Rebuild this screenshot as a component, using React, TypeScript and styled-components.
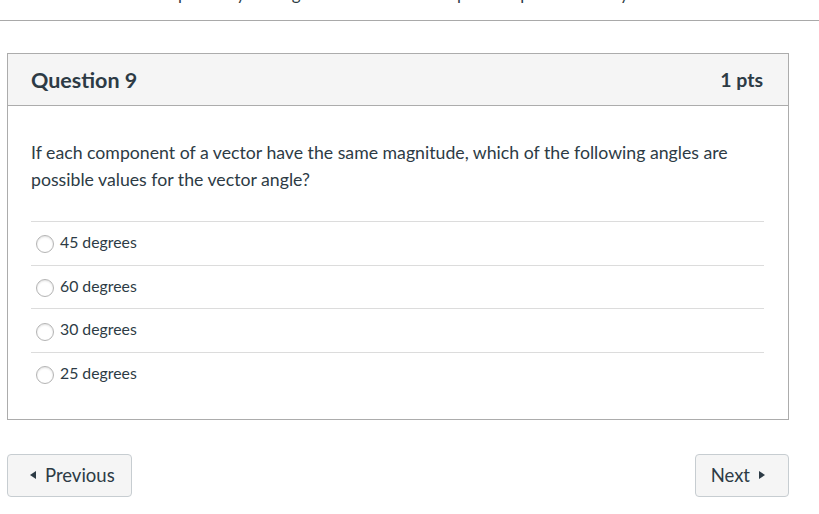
import React from "react";
import styled, { createGlobalStyle } from "styled-components";

const Global = createGlobalStyle`
  html, body { margin: 0; padding: 0; background: #ffffff; }
  body { font-family: Lato, "Noto Sans", "Liberation Sans", sans-serif; color: #2d3b45; }
`;

const Page = styled.div`
  width: 819px;
  height: 514px;
  overflow: hidden;
`;

const TopStrip = styled.div`
  height: 20px;
  border-bottom: 1px solid #a9a9a9;
  overflow: hidden;
`;

const CutText = styled.div`
  font-size: 17px;
  line-height: 20px;
  margin-top: -16px;
  padding-left: 31px;
  white-space: nowrap;
  color: #2d3b45;
`;

const Content = styled.div`
  margin: 32px 0 0 7px;
  width: 782px;
`;

const QuestionBox = styled.div`
  border: 1px solid #acacac;
  background: #fff;
`;

const Header = styled.div`
  height: 51px;
  background: #f5f5f5;
  border-bottom: 1px solid #acacac;
  display: flex;
  align-items: center;
  justify-content: space-between;
  padding: 0 25px 0 23px;
`;

const Title = styled.h2`
  margin: 0;
  font-size: 21.5px;
  font-weight: 700;
  color: #2d3b45;
`;

const Points = styled.span`
  font-size: 19.5px;
  font-weight: 700;
  color: #2d3b45;
`;

const Body = styled.div`
  padding: 33px 24px 23px 23px;
`;

const Prompt = styled.p`
  margin: 0 0 28px 0;
  font-size: 17.7px;
  line-height: 27px;
`;

const Answers = styled.div`
  display: flex;
  flex-direction: column;
`;

const AnswerRow = styled.label`
  height: 42.7px;
  border-top: 1px solid #dcdcdc;
  display: flex;
  align-items: center;
  gap: 6px;
  padding-left: 5px;
  cursor: pointer;
`;

const Radio = styled.span`
  width: 16px;
  height: 16px;
  border-radius: 50%;
  border: 1px solid #b4b4b4;
  background: #fff;
  box-shadow: inset 0 1px 2px rgba(0, 0, 0, 0.12);
  margin-top: 2px;
  flex: none;
`;

const AnswerText = styled.span`
  font-size: 15.8px;
  color: #2d3b45;
  margin-top: -4px;
`;

const Nav = styled.div`
  margin-top: 34px;
  display: flex;
  justify-content: space-between;
`;

const NavButton = styled.button<{ $side: "prev" | "next" }>`
  height: 43px;
  background: #f5f5f5;
  border: 1px solid #c7cdd1;
  border-radius: 4px;
  display: flex;
  align-items: center;
  gap: 9px;
  padding: ${(p) => (p.$side === "prev" ? "0 16px 0 22px" : "0 23px 0 15px")};
  font-family: Lato, "Noto Sans", "Liberation Sans", sans-serif;
  font-size: 18.5px;
  color: #2d3b45;
  cursor: pointer;
`;

const Caret = ({ dir }: { dir: "left" | "right" }) => (
  <svg width="6" height="8" viewBox="0 0 6 8">
    {dir === "left" ? (
      <polygon points="6,0 6,8 0,4" fill="#2d3b45" />
    ) : (
      <polygon points="0,0 0,8 6,4" fill="#2d3b45" />
    )}
  </svg>
);

const answers = ["45 degrees", "60 degrees", "30 degrees", "25 degrees"];

export default function App() {
  return (
    <Page>
      <Global />
      <TopStrip>
        <CutText>
          Read the items and pick it by the big idea and rest on the point to problem as my answer.
        </CutText>
      </TopStrip>
      <Content>
        <QuestionBox>
          <Header>
            <Title>Question 9</Title>
            <Points>1 pts</Points>
          </Header>
          <Body>
            <Prompt>
              If each component of a vector have the same magnitude, which of the following angles are possible values
              for the vector angle?
            </Prompt>
            <Answers>
              {answers.map((a) => (
                <AnswerRow key={a}>
                  <Radio />
                  <AnswerText>{a}</AnswerText>
                </AnswerRow>
              ))}
            </Answers>
          </Body>
        </QuestionBox>
        <Nav>
          <NavButton $side="prev">
            <Caret dir="left" />
            Previous
          </NavButton>
          <NavButton $side="next">
            Next
            <Caret dir="right" />
          </NavButton>
        </Nav>
      </Content>
    </Page>
  );
}
